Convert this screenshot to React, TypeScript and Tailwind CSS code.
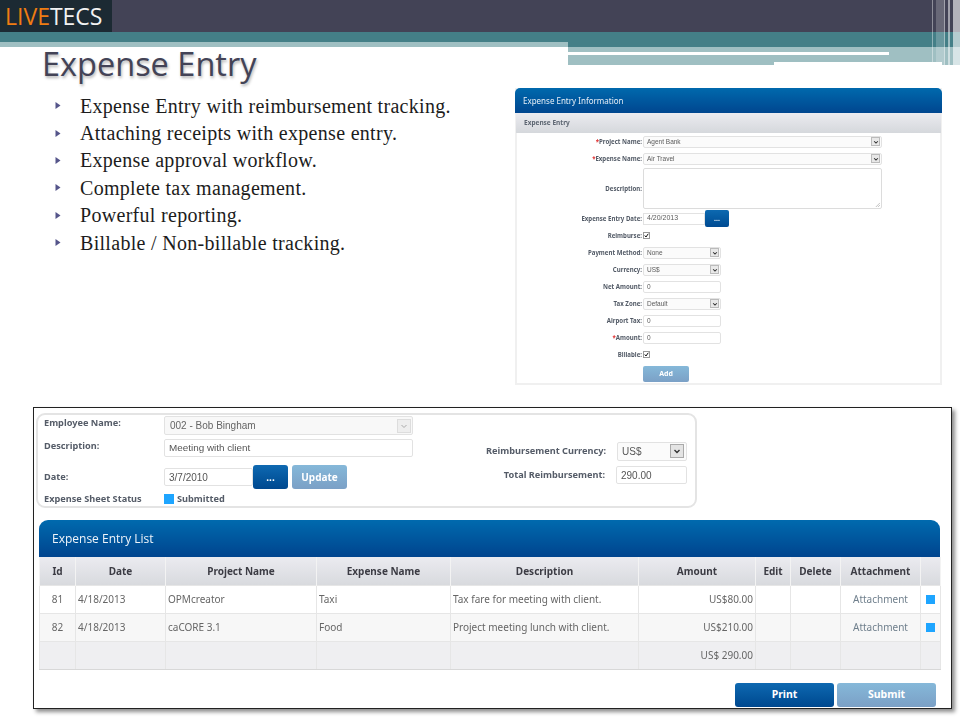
import React from "react";

const serif = "[font-family:'Liberation_Serif',serif]";
const lbl = "font-['Noto_Sans',sans-serif] font-bold";
const arial = "font-['Liberation_Sans',sans-serif]";

const bullets = [
  "Expense Entry with reimbursement tracking.",
  "Attaching receipts with expense entry.",
  "Expense approval workflow.",
  "Complete tax management.",
  "Powerful reporting.",
  "Billable / Non-billable tracking.",
];

function Chevron({ className }: { className?: string }) {
  return (
    <svg viewBox="0 0 8 8" className={className}>
      <path d="M1.5 3 L4 5.5 L6.5 3" fill="none" stroke="#333" strokeWidth="1.4" />
    </svg>
  );
}

function MiniSelect({ value, w }: { value: string; w: string }) {
  return (
    <div className={`${w} h-[12px] flex items-center justify-between border border-[#e2e2e2] rounded-[2px] bg-[#fbfbfb] pl-[3px] pr-[1px] text-[6.5px] text-[#5a5a5a] ${arial}`}>
      <span>{value}</span>
      <span className="w-[9px] h-[9px] flex items-center justify-center border border-[#bbb] bg-[#e8e8e8]">
        <Chevron className="w-[6px] h-[6px]" />
      </span>
    </div>
  );
}

function MiniInput({ value, w = "w-[78px]" }: { value: string; w?: string }) {
  return (
    <div className={`${w} h-[12px] flex items-center border border-[#e2e2e2] rounded-[2px] bg-white pl-[3px] text-[6.5px] text-[#5a5a5a] ${arial}`}>
      {value}
    </div>
  );
}

function MiniCheck() {
  return (
    <span className="w-[7px] h-[7px] border border-[#999] bg-white flex items-center justify-center">
      <svg viewBox="0 0 8 8" className="w-[7px] h-[7px]">
        <path d="M1.2 4 L3.2 6.4 L6.8 1.2" fill="none" stroke="#111" strokeWidth="1.6" />
      </svg>
    </span>
  );
}

function Row({ label, req, h = "h-[17px]", children }: { label: string; req?: boolean; h?: string; children: React.ReactNode }) {
  return (
    <div className={`flex items-center ${h}`}>
      <div className={`w-[126px] pr-[1px] text-right text-[6.1px] text-[#525a66] ${lbl}`}>
        {req && <span className="text-[#e03030]">*</span>}
        {label}
      </div>
      {children}
    </div>
  );
}

function FormPanel() {
  return (
    <div className="w-[427px] h-[297px] border-x-2 border-b-2 border-[#f0f0f0] blur-[0.3px]">
      <div className={`h-[25px] -mx-[2px] rounded-t-[5px] bg-gradient-to-b from-[#0069ad] to-[#00468f] flex items-center pl-[8px] text-[8px] text-[#e6eef6] ${lbl} font-normal`}>
        Expense Entry Information
      </div>
      <div className={`h-[20px] -mx-[1px] bg-gradient-to-b from-[#ebebf0] to-[#d5d8dc] flex items-center pl-[8px] text-[6.5px] text-[#5d6672] ${lbl}`}>
        Expense Entry
      </div>
      <Row label="Project Name:" req>
        <MiniSelect value="Agent Bank" w="w-[239px]" />
      </Row>
      <Row label="Expense Name:" req>
        <MiniSelect value="Air Travel" w="w-[239px]" />
      </Row>
      <Row label="Description:" h="h-[43px]">
        <div className="relative w-[239px] h-[41px] border border-[#dcdcdc] rounded-[2px] bg-white">
          <svg viewBox="0 0 6 6" className="absolute right-[1px] bottom-[1px] w-[5px] h-[5px]">
            <path d="M1 6 L6 1 M3.5 6 L6 3.5" stroke="#999" strokeWidth="0.7" />
          </svg>
        </div>
      </Row>
      <Row label="Expense Entry Date:">
        <div className="flex items-center">
          <div className={`w-[62px] h-[12px] flex items-center border border-[#e2e2e2] bg-white pl-[3px] text-[7px] text-[#5a5a5a] ${arial}`}>
            4/20/2013
          </div>
          <div className="w-[24px] h-[17px] rounded-[2px] bg-gradient-to-b from-[#0d69b0] to-[#004a92] flex items-center justify-center text-[7px] font-bold text-white leading-none">
            ...
          </div>
        </div>
      </Row>
      <Row label="Reimburse:">
        <MiniCheck />
      </Row>
      <Row label="Payment Method:">
        <MiniSelect value="None" w="w-[78px]" />
      </Row>
      <Row label="Currency:">
        <MiniSelect value="US$" w="w-[78px]" />
      </Row>
      <Row label="Net Amount:">
        <MiniInput value="0" />
      </Row>
      <Row label="Tax Zone:">
        <MiniSelect value="Default" w="w-[78px]" />
      </Row>
      <Row label="Airport Tax:">
        <MiniInput value="0" />
      </Row>
      <Row label="Amount:" req>
        <MiniInput value="0" />
      </Row>
      <Row label="Billable:">
        <MiniCheck />
      </Row>
      <div className="pl-[126px] pt-[3px]">
        <div className={`w-[46px] h-[16px] rounded-[2px] bg-gradient-to-b from-[#85b8d9] to-[#7ba0c6] flex items-center justify-center text-[7px] text-white ${lbl}`}>
          Add
        </div>
      </div>
    </div>
  );
}

const cols = [
  ["Id", "w-[36px]"],
  ["Date", "w-[90px]"],
  ["Project Name", "w-[151px]"],
  ["Expense Name", "w-[134px]"],
  ["Description", "w-[188px]"],
  ["Amount", "w-[117px]"],
  ["Edit", "w-[35px]"],
  ["Delete", "w-[50px]"],
  ["Attachment", "w-[80px]"],
  ["", "w-[20px]"],
];

const rows = [
  { id: "81", date: "4/18/2013", project: "OPMcreator", expense: "Taxi", desc: "Tax fare for meeting with client.", amount: "US$80.00", bg: "bg-white" },
  { id: "82", date: "4/18/2013", project: "caCORE 3.1", expense: "Food", desc: "Project meeting lunch with client.", amount: "US$210.00", bg: "bg-[#f7f7f7]" },
];

const td = "h-[28px] border border-[#e6e6e6] px-[2px] align-middle font-normal";

function Box({ className }: { className?: string }) {
  return <span className={`inline-block w-[9px] h-[9px] bg-[#1ea5ff] ${className ?? ""}`} />;
}

function ExpenseList() {
  return (
    <div className="ml-[5px] mt-[12px] w-[901px] blur-[0.2px]">
      <div className={`h-[37px] rounded-t-[9px] bg-gradient-to-b from-[#006aae] to-[#00448e] flex items-center pl-[13px] text-[12px] text-[#eef4fa] font-['Open_Sans',sans-serif]`}>
        Expense Entry List
      </div>
      <table className={`w-[901px] table-fixed border-collapse text-[10px] text-[#666] ${lbl} font-normal`}>
        <colgroup>
          {cols.map(([n, w], i) => (
            <col key={i} className={w} />
          ))}
        </colgroup>
        <thead>
          <tr className="bg-gradient-to-b from-[#ebebf0] to-[#d8dade]">
            {cols.map(([n], i) => (
              <th key={i} className={`h-[28px] pt-[1px] border-x border-[#f3f3f3] text-center text-[10px] font-bold text-[#3c3c44]`}>
                {n}
              </th>
            ))}
          </tr>
        </thead>
        <tbody>
          {rows.map((r) => (
            <tr key={r.id} className={r.bg}>
              <td className={`${td} text-center`}>{r.id}</td>
              <td className={td}>{r.date}</td>
              <td className={td}>{r.project}</td>
              <td className={td}>{r.expense}</td>
              <td className={td}>{r.desc}</td>
              <td className={`${td} text-right`}>{r.amount}</td>
              <td className={td}></td>
              <td className={td}></td>
              <td className={`${td} text-center text-[#6f7f8c]`}>Attachment</td>
              <td className={`${td} text-center`}>
                <Box className="w-[8px] h-[8px] align-middle" />
              </td>
            </tr>
          ))}
          <tr className="bg-[#efeff1]">
            {cols.map((_, i) => (
              <td key={i} className={`${td} border-b-[#d8d8d8] ${i === 5 ? "text-right" : ""}`}>
                {i === 5 ? "US$ 290.00" : ""}
              </td>
            ))}
          </tr>
        </tbody>
      </table>
    </div>
  );
}

function Screenshot() {
  return (
    <div className="ml-[33px] w-[919px] h-[302px] border border-[#222] bg-white shadow-[3px_3px_4px_rgba(0,0,0,0.45)] pt-[5px] overflow-visible">
      <div className="ml-[2px] w-[661px] h-[95px] rounded-[9px] border-2 border-[#e4e4e4] flex blur-[0.2px]">
        <div className="w-[444px] pl-[6px]">
          <div className="flex h-[24px] items-start">
            <div className={`w-[120px] pt-[1px] text-[9.2px] text-[#555c68] ${lbl}`}>Employee Name:</div>
            <div className={`w-[249px] h-[19px] mt-[1px] flex items-center justify-between border border-[#e2e2e2] rounded-[2px] bg-[#f8f8f8] pl-[5px] pr-[1px] text-[10px] text-[#666] ${arial}`}>
              002 - Bob Bingham
              <span className="w-[14px] h-[14px] flex items-center justify-center border border-[#ddd] bg-[#eee]">
                <svg viewBox="0 0 8 8" className="w-[8px] h-[8px]">
                  <path d="M1.5 3 L4 5.5 L6.5 3" fill="none" stroke="#aaa" strokeWidth="1" />
                </svg>
              </span>
            </div>
          </div>
          <div className="flex h-[25px] items-start">
            <div className={`w-[120px] text-[9.2px] text-[#555c68] ${lbl}`}>Description:</div>
            <div className={`w-[249px] h-[18px] flex items-center border border-[#e2e2e2] rounded-[2px] bg-white pl-[4px] text-[9.9px] text-[#555] ${arial}`}>
              Meeting with client
            </div>
          </div>
          <div className="flex h-[26px] items-center">
            <div className={`w-[120px] text-[9.2px] text-[#555c68] ${lbl}`}>Date:</div>
            <div className={`w-[89px] h-[18px] flex items-center border border-[#e2e2e2] rounded-[2px] bg-white pl-[4px] text-[10px] text-[#555] ${arial}`}>
              3/7/2010
            </div>
            <div className="w-[35px] h-[24px] rounded-[3px] bg-gradient-to-b from-[#0f69b1] to-[#00488f] flex items-center justify-center text-[10px] font-bold text-white">
              ...
            </div>
            <div className={`ml-[4px] w-[55px] h-[24px] rounded-[3px] bg-gradient-to-b from-[#85b8d9] to-[#7ba0c6] flex items-center justify-center text-[10px] text-white ${lbl}`}>
              Update
            </div>
          </div>
          <div className="flex h-[17px] items-center">
            <div className={`w-[120px] text-[9.2px] text-[#555c68] ${lbl}`}>Expense Sheet Status</div>
            <Box className="w-[10px] h-[10px]" />
            <span className={`ml-[3px] text-[9.2px] text-[#555c68] ${lbl}`}>Submitted</span>
          </div>
        </div>
        <div className="flex-1 pt-[24px] pr-[8px]">
          <div className="flex h-[24px] items-center justify-end">
            <span className={`mr-[11px] text-[9.2px] text-[#555c68] ${lbl}`}>Reimbursement Currency:</span>
            <div className={`w-[70px] h-[19px] flex items-center justify-between border border-[#e2e2e2] rounded-[2px] bg-[#fbfbfb] pl-[4px] pr-[2px] text-[10px] text-[#555] ${arial}`}>
              US$
              <span className="w-[14px] h-[14px] flex items-center justify-center border border-[#aaa] bg-[#e4e4e4]">
                <Chevron className="w-[8px] h-[8px]" />
              </span>
            </div>
          </div>
          <div className="flex h-[24px] items-center justify-end">
            <span className={`mr-[11px] text-[9.2px] text-[#555c68] ${lbl}`}>Total Reimbursement:</span>
            <div className={`w-[71px] h-[18px] flex items-center border border-[#e2e2e2] rounded-[2px] bg-white pl-[4px] text-[10px] text-[#555] ${arial}`}>
              290.00
            </div>
          </div>
        </div>
      </div>
      <ExpenseList />
      <div className="flex justify-end gap-[3px] pr-[15px] pt-[13px]">
        <div className={`w-[99px] h-[24px] rounded-[3px] bg-gradient-to-b from-[#0f69b1] to-[#00488f] flex items-center justify-center text-[10.5px] text-white ${lbl}`}>
          Print
        </div>
        <div className={`w-[99px] h-[24px] rounded-[3px] bg-gradient-to-b from-[#85b8d9] to-[#7ba0c6] flex items-center justify-center text-[10.5px] text-white ${lbl}`}>
          Submit
        </div>
      </div>
    </div>
  );
}

function Header() {
  return (
    <div className="relative">
      <div className="h-[32px] bg-[#434356]">
        <div className="w-[112px] h-[32px] bg-[#1c2a33] flex items-center pl-[5px] text-[23px] font-['Open_Sans',sans-serif] leading-none">
          <span className="text-[#ef7d12]">LIVE</span>
          <span className="text-[#f2f2f2]">TECS</span>
        </div>
      </div>
      <div className="h-[10px] bg-[#447f87]" />
      <div className="flex h-[5px]">
        <div className="w-[568px] bg-[#9fbfc2]" />
        <div className="flex-1 bg-[#447f87]" />
      </div>
      <div className="absolute left-[568px] right-0 top-[47px] h-[18px] bg-[#9fbfc2]">
        <div className="mt-[5px] w-[321px] h-[3px] bg-white" />
        <div className="absolute left-[206px] w-[168px] top-[15px] h-[3px] bg-white" />
      </div>
      <div className="absolute left-[932px] top-0 w-[1px] h-[65px] bg-white/40" />
      <div className="absolute left-[936px] top-0 w-[8px] h-[65px] bg-white/20" />
      <div className="absolute left-[944px] top-0 w-[1px] h-[65px] bg-white/50" />
      <div className="absolute left-[948px] top-0 w-[2px] h-[65px] bg-white/50" />
      <div className="absolute left-[953px] top-0 w-[7px] h-[65px] bg-white/60" />
    </div>
  );
}

export default function App() {
  return (
    <div className="w-[960px] h-[720px] bg-white overflow-hidden">
      <Header />
      <div className="flex h-[338px]">
        <div className="w-[515px]">
          <h1 className="pl-[42px] -mt-[1px] text-[32.5px] leading-[36px] font-medium text-[#434356] font-['Open_Sans',sans-serif] [text-shadow:1px_2px_3px_rgba(0,0,0,0.3)]">
            Expense Entry
          </h1>
          <ul className="mt-[10px] pl-[55px]">
            {bullets.map((b) => (
              <li key={b} className="flex items-center h-[27.4px]">
                <svg viewBox="0 0 6 8" className="w-[6px] h-[9px] shrink-0">
                  <path d="M0.5 0.5 L5.5 4 L0.5 7.5 Z" fill="#55558a" />
                </svg>
                <span className={`ml-[19px] text-[20px] tracking-[0.3px] text-[#1c1c1c] ${serif}`}>{b}</span>
              </li>
            ))}
          </ul>
        </div>
        <div className="pt-[41px]">
          <FormPanel />
        </div>
      </div>
      <div className="pt-[22px]">
        <Screenshot />
      </div>
    </div>
  );
}
